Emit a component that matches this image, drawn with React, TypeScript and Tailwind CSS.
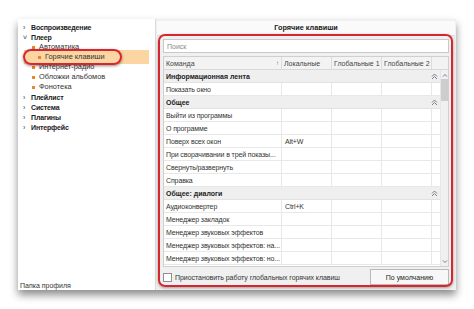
import React from "react";

const tree = [
  { label: "Воспроизведение", kind: "top", open: false },
  { label: "Плеер", kind: "top", open: true },
  { label: "Автоматика", kind: "child" },
  { label: "Горячие клавиши", kind: "child", selected: true },
  { label: "Интернет-радио", kind: "child" },
  { label: "Обложки альбомов", kind: "child" },
  { label: "Фонотека", kind: "child" },
  { label: "Плейлист", kind: "top", open: false },
  { label: "Система", kind: "top", open: false },
  { label: "Плагины", kind: "top", open: false },
  { label: "Интерфейс", kind: "top", open: false },
];

type Row = { text: string; group?: boolean; local?: string };

const rows: Row[] = [
  { text: "Информационная лента", group: true },
  { text: "Показать окно" },
  { text: "Общее", group: true },
  { text: "Выйти из программы" },
  { text: "О программе" },
  { text: "Поверх всех окон", local: "Alt+W" },
  { text: "При сворачивании в трей показы..." },
  { text: "Свернуть/развернуть" },
  { text: "Справка" },
  { text: "Общее: диалоги", group: true },
  { text: "Аудиоконвертер", local: "Ctrl+K" },
  { text: "Менеджер закладок" },
  { text: "Менеджер звуковых эффектов" },
  { text: "Менеджер звуковых эффектов: на..." },
  { text: "Менеджер звуковых эффектов: но..." },
];

const Collapse = () => (
  <svg width="7" height="7" viewBox="0 0 7 7" className="text-gray-500">
    <path d="M1 3.5 L3.5 1 L6 3.5 M1 6 L3.5 3.5 L6 6" fill="none" stroke="currentColor" strokeWidth="0.9" />
  </svg>
);

const Chevron = ({ up }: { up?: boolean }) => (
  <svg width="6" height="4" viewBox="0 0 6 4" className="text-gray-500">
    <path d={up ? "M1 3.5 L3 1.5 L5 3.5" : "M1 0.5 L3 2.5 L5 0.5"} fill="none" stroke="currentColor" strokeWidth="0.9" />
  </svg>
);

const Tree = () => (
  <div className="w-[137px] bg-white flex flex-col pt-[3px] relative">
    {tree.map((t) =>
      t.kind === "top" ? (
        <div key={t.label} className="h-[10px] flex items-center pl-[5px] font-bold text-[7px] tracking-[-0.15px] text-[#222]">
          <span className="w-[8px] text-[7px] text-gray-500">{t.open ? "˅" : "›"}</span>
          {t.label}
        </div>
      ) : (
        <div
          key={t.label}
          className={`h-[10px] flex items-center pl-[14px] text-[7.4px] text-[#333] ${t.selected ? "bg-[#fcd5a2] mx-[6px] pl-[8px] h-[14px] my-[-2px]" : ""}`}
        >
          <span className="w-[3px] h-[3px] bg-[#e8862c] mr-[4px]" />
          {t.label}
        </div>
      )
    )}
    <div className="mt-auto pl-[2px] mb-[-1px] text-[7px] text-[#333] leading-[10px]">Папка профиля</div>
    <div className="absolute left-[5px] top-[30px] w-[99px] h-[16px] rounded-[8px] border-2 border-[#d8262e] shadow-[0_1px_3px_rgba(0,0,0,0.45)]" />
  </div>
);

const HotkeyTable = () => (
  <div className="bg-white border border-[#cfcfcf] flex flex-col h-[211px]">
    <div className="flex h-[13px] bg-[#f3f3f3] border-b border-[#d8d8d8] text-[7px] text-[#444] whitespace-nowrap">
      <div className="w-[118px] flex items-center justify-between px-[2px] border-r border-[#dcdcdc]">
        <span>Команда</span>
        <span className="text-[6px] text-gray-500">↑</span>
      </div>
      <div className="w-[50px] flex items-center px-[2px] border-r border-[#dcdcdc]">Локальные</div>
      <div className="w-[50px] flex items-center px-[2px] border-r border-[#dcdcdc]">Глобальные 1</div>
      <div className="w-[50px] flex items-center px-[2px] border-r border-[#dcdcdc]">Глобальные 2</div>
      <div className="flex-1" />
    </div>
    <div className="flex flex-1 min-h-0">
      <div className="flex-1 flex flex-col">
        {rows.map((r) =>
          r.group ? (
            <div key={r.text} className="h-[13px] flex items-center justify-between bg-[#efefef] border-b border-[#e2e2e2] px-[2px] font-bold text-[7px] text-[#222]">
              <span>{r.text}</span>
              <Collapse />
            </div>
          ) : (
            <div key={r.text} className="h-[13px] flex border-b border-[#e8e8e8] text-[7px] tracking-[-0.12px] text-[#333] whitespace-nowrap">
              <div className="w-[118px] flex items-center px-[2px] border-r border-[#e8e8e8] overflow-hidden">{r.text}</div>
              <div className="w-[50px] flex items-center px-[3px] border-r border-[#e8e8e8]">{r.local ?? ""}</div>
              <div className="w-[50px] border-r border-[#e8e8e8]" />
              <div className="w-[50px] border-r border-[#e8e8e8]" />
              <div className="flex-1" />
            </div>
          )
        )}
      </div>
      <div className="w-[8px] bg-[#f0f0f0] flex flex-col items-center border-l border-[#e6e6e6]">
        <div className="h-[9px] flex items-center"><Chevron up /></div>
        <div className="w-[7px] h-[22px] bg-[#cdcdcd]" />
        <div className="flex-1" />
        <div className="h-[9px] flex items-center"><Chevron /></div>
      </div>
    </div>
  </div>
);

const Settings = () => (
  <div className="flex-1 bg-[#f0f0f0] flex flex-col border-l border-[#dadada] relative">
    <div className="h-[15px] mt-[2px] mx-[1px] bg-[#fafafa] border-b border-[#dedede] flex items-center justify-center font-bold text-[7.3px] text-[#222]">
      Горячие клавиши
    </div>
    <div className="flex flex-col px-[7px] pt-[3px]">
      <div className="h-[14px] bg-white border border-[#c9c9c9] flex items-center px-[3px] text-[7px] text-[#8a8a8a]">Поиск</div>
      <div className="mt-[3px]">
        <HotkeyTable />
      </div>
      <div className="flex items-center justify-between mt-[2px] h-[16px]">
        <div className="flex items-center gap-[3px] text-[7px] tracking-[-0.05px] text-[#333] whitespace-nowrap">
          <span className="w-[9px] h-[9px] bg-white border border-[#8f8f8f]" />
          Приостановить работу глобальных горячих клавиш
        </div>
        <div className="w-[79px] h-[16px] bg-[#f7f7f7] border border-[#b9b9b9] flex items-center justify-center text-[7px] text-[#222]">
          По умолчанию
        </div>
      </div>
    </div>
    <div className="absolute left-[2px] top-[15px] w-[295px] h-[253px] rounded-[7px] border-2 border-[#d8262e] shadow-[0_1px_3px_rgba(0,0,0,0.35)]" />
  </div>
);

export default function App() {
  return (
    <div className="w-[474px] h-[309px] bg-white font-['Liberation_Sans',Arial,sans-serif] leading-none">
      <div className="ml-[18px] pt-[19px]">
        <div className="w-[438px] h-[271px] flex shadow-[0_5px_8px_rgba(0,0,0,0.45)]">
          <Tree />
          <Settings />
        </div>
      </div>
    </div>
  );
}
